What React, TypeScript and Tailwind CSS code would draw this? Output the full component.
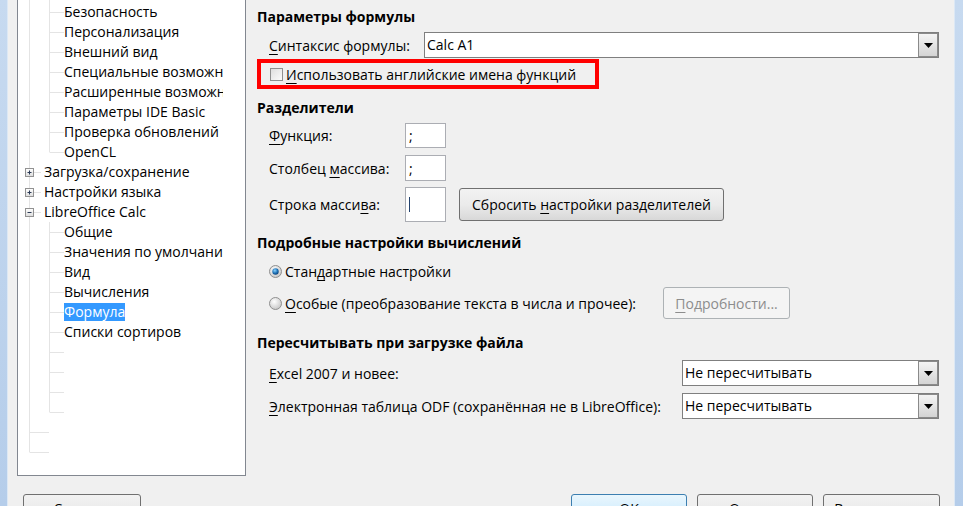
import React from "react";

type TreeRow = {
  text?: string;
  level: 1 | 2;
  exp?: "+" | "-";
  v1?: "full" | "top" | "none";
  v2?: "full" | "top" | "none";
  selected?: boolean;
  h?: number;
};

const LINE = "#e4e4e4";

const rows: TreeRow[] = [
  { level: 2, v1: "full", v2: "full", h: 2 },
  { text: "Безопасность", level: 2, v1: "full", v2: "full" },
  { text: "Персонализация", level: 2, v1: "full", v2: "full" },
  { text: "Внешний вид", level: 2, v1: "full", v2: "full" },
  { text: "Специальные возможности", level: 2, v1: "full", v2: "full" },
  { text: "Расширенные возможности", level: 2, v1: "full", v2: "full" },
  { text: "Параметры IDE Basic", level: 2, v1: "full", v2: "full" },
  { text: "Проверка обновлений", level: 2, v1: "full", v2: "full" },
  { text: "OpenCL", level: 2, v1: "full", v2: "top" },
  { text: "Загрузка/сохранение", level: 1, exp: "+", v1: "full" },
  { text: "Настройки языка", level: 1, exp: "+", v1: "full" },
  { text: "LibreOffice Calc", level: 1, exp: "-", v1: "full" },
  { text: "Общие", level: 2, v1: "full", v2: "full" },
  { text: "Значения по умолчанию", level: 2, v1: "full", v2: "full" },
  { text: "Вид", level: 2, v1: "full", v2: "full" },
  { text: "Вычисления", level: 2, v1: "full", v2: "full" },
  { text: "Формула", level: 2, v1: "full", v2: "full", selected: true },
  { text: "Списки сортиров", level: 2, v1: "full", v2: "full" },
  { level: 2, v1: "full", v2: "full" },
  { level: 2, v1: "full", v2: "full" },
  { level: 2, v1: "full", v2: "full" },
  { level: 2, v1: "full", v2: "top" },
  { level: 1, v1: "full" },
  { level: 1, v1: "top" },
];

function Connector({ row }: { row: TreeRow }) {
  const h = row.h ?? 20;
  const wide = row.level === 2 || !row.text;
  const w = wide ? 46 : 26;
  const vEnd = (s?: string) => (s === "top" ? 10 : h);
  return (
    <svg width={w} height={h} className="shrink-0 block">
      {row.v1 && row.v1 !== "none" && (
        <line x1={11.5} y1={0} x2={11.5} y2={vEnd(row.v1)} stroke={LINE} />
      )}
      {row.level === 2 && row.v2 && row.v2 !== "none" && (
        <line x1={31.5} y1={0} x2={31.5} y2={vEnd(row.v2)} stroke={LINE} />
      )}
      {h === 20 && row.level === 2 && (
        <line x1={31.5} y1={10.5} x2={46} y2={10.5} stroke={LINE} />
      )}
      {h === 20 && row.level === 1 && !row.exp && (
        <line x1={11.5} y1={10.5} x2={31} y2={10.5} stroke={LINE} />
      )}
      {row.exp && (
        <g>
          <line x1={16} y1={10.5} x2={23} y2={10.5} stroke={LINE} />
          <defs>
            <linearGradient id="expg" x1="0" y1="0" x2="0" y2="1">
              <stop offset="0" stopColor="#ffffff" />
              <stop offset="1" stopColor="#dcdcdc" />
            </linearGradient>
          </defs>
          <rect x={7.5} y={6.5} width={8} height={8} fill="url(#expg)" stroke="#929292" />
          <line x1={9.5} y1={10.5} x2={13.5} y2={10.5} stroke="#2b3a55" />
          {row.exp === "+" && <line x1={11.5} y1={8.5} x2={11.5} y2={12.5} stroke="#2b3a55" />}
        </g>
      )}
    </svg>
  );
}

function Tree() {
  return (
    <div className="ml-[9px] w-[229px] h-[476px] bg-white border-x border-b border-[#828790]">
      <div className="w-[205px] overflow-hidden">
        {rows.map((r, i) => (
          <div
            key={i}
            className="flex items-center whitespace-nowrap"
            style={{ height: r.h ?? 20 }}
          >
            <Connector row={r} />
            {r.text && (
              <span
                className={
                  r.selected
                    ? "bg-[#3399ff] text-white h-[18px] leading-[18px]"
                    : "leading-[20px]"
                }
              >
                {r.text}
              </span>
            )}
          </div>
        ))}
      </div>
    </div>
  );
}

function U({ children }: { children: React.ReactNode }) {
  return <span className="underline underline-offset-[3px] decoration-1">{children}</span>;
}

function DropBtn() {
  return (
    <div className="w-[20px] h-full border border-[#8a8a8a] bg-gradient-to-b from-[#f4f4f4] to-[#d4d4d4] flex items-center justify-center shrink-0">
      <svg width="9" height="5">
        <polygon points="0,0 9,0 4.5,5" fill="#000" />
      </svg>
    </div>
  );
}

function Combo({ value, w }: { value: string; w: string }) {
  return (
    <div className={`${w} h-[26px] border border-[#7f7f7f] bg-white flex items-stretch shrink-0`}>
      <div className="flex-1 pl-[2px] leading-[24px] whitespace-nowrap">{value}</div>
      <DropBtn />
    </div>
  );
}

function Heading({ children, mt }: { children: React.ReactNode; mt: string }) {
  return <div className={`${mt} h-[20px] leading-[20px] font-bold whitespace-nowrap`}>{children}</div>;
}

function SmallInput({ h, children }: { h: string; children?: React.ReactNode }) {
  return (
    <div className={`w-[41px] ${h} border border-[#abadb3] bg-white pl-[3px] flex items-center shrink-0`}>
      {children}
    </div>
  );
}

function WinButton({
  children,
  className = "",
  disabled,
}: {
  children: React.ReactNode;
  className?: string;
  disabled?: boolean;
}) {
  return (
    <div
      className={`rounded-[3px] border flex items-center justify-center whitespace-nowrap shrink-0 ${
        disabled
          ? "border-[#adb2b5] bg-[#f4f4f4] text-[#8d8d8d]"
          : "border-[#707070] bg-gradient-to-b from-[#f2f2f2] via-[#ebebeb] to-[#d8d8d8]"
      } ${className}`}
    >
      {children}
    </div>
  );
}

function Radio({ checked }: { checked?: boolean }) {
  return (
    <svg width="13" height="13" className="shrink-0">
      <defs>
        <radialGradient id="rg1" cx="0.4" cy="0.35" r="0.7">
          <stop offset="0" stopColor="#ffffff" />
          <stop offset="1" stopColor="#c4c4c4" />
        </radialGradient>
        <radialGradient id="rg2" cx="0.4" cy="0.35" r="0.7">
          <stop offset="0" stopColor="#8ad3ff" />
          <stop offset="0.6" stopColor="#1d6fb4" />
          <stop offset="1" stopColor="#0d3f73" />
        </radialGradient>
      </defs>
      <circle cx="6.5" cy="6.5" r="6" fill="url(#rg1)" stroke="#8f8f8f" />
      {checked && <circle cx="6.5" cy="6.5" r="3.2" fill="url(#rg2)" />}
    </svg>
  );
}

function RightPanel() {
  return (
    <div className="flex-1 pl-[11px] flex flex-col">
      <Heading mt="mt-[7px]">Параметры формулы</Heading>
      <div className="mt-[5px] h-[26px] flex items-center">
        <div className="ml-[12px] w-[155px]">
          <U>С</U>интаксис формулы:
        </div>
        <Combo value="Calc A1" w="w-[515px]" />
      </div>
      <div className="mt-[1px] w-[342px] h-[30px] border-4 border-[#ff0000] flex items-center pl-[9px]">
        <div className="w-[13px] h-[13px] border border-[#8f8f8f] bg-gradient-to-br from-[#dedede] to-[#fbfbfb] shrink-0" />
        <div className="ml-[3px] whitespace-nowrap">
          <U>И</U>спользовать английские имена функций
        </div>
      </div>
      <Heading mt="mt-[9px]">Разделители</Heading>
      <div className="mt-[5px] flex items-center">
        <div className="ml-[12px] w-[136px]">
          <U>Ф</U>ункция:
        </div>
        <SmallInput h="h-[25px]">;</SmallInput>
      </div>
      <div className="mt-[7px] flex items-center">
        <div className="ml-[12px] w-[136px]">
          Столбец <U>м</U>ассива:
        </div>
        <SmallInput h="h-[26px]">;</SmallInput>
      </div>
      <div className="mt-[6px] flex items-center">
        <div className="ml-[12px] w-[136px]">
          Строка масси<U>в</U>а:
        </div>
        <SmallInput h="h-[35px]">
          <div className="w-px h-[15px] bg-[#23426e]" />
        </SmallInput>
        <WinButton className="ml-[13px] w-[265px] h-[33px]">
          <span>
            Сбросить <U>н</U>астройки разделителей
          </span>
        </WinButton>
      </div>
      <Heading mt="mt-[11px]">Подробные настройки вычислений</Heading>
      <div className="mt-[8px] h-[20px] flex items-center ml-[12px]">
        <Radio checked />
        <div className="ml-[3px]">
          Стан<U>д</U>артные настройки
        </div>
      </div>
      <div className="mt-[6px] h-[32px] flex items-center ml-[12px]">
        <Radio />
        <div className="ml-[3px] w-[378px] whitespace-nowrap">
          <U>О</U>собые (преобразование текста в числа и прочее):
        </div>
        <WinButton disabled className="w-[127px] h-[32px]">
          <span>
            <U>П</U>одробности...
          </span>
        </WinButton>
      </div>
      <Heading mt="mt-[14px]">Пересчитывать при загрузке файла</Heading>
      <div className="mt-[7px] flex items-center">
        <div className="ml-[12px] w-[413px] whitespace-nowrap">
          <U>E</U>xcel 2007 и новее:
        </div>
        <Combo value="Не пересчитывать" w="w-[257px]" />
      </div>
      <div className="mt-[7px] flex items-center">
        <div className="ml-[12px] w-[413px] whitespace-nowrap">
          <U>Э</U>лектронная таблица ODF (сохранённая не в LibreOffice):
        </div>
        <Combo value="Не пересчитывать" w="w-[257px]" />
      </div>
    </div>
  );
}

export default function App() {
  return (
    <div className="w-[963px] h-[506px] overflow-hidden flex bg-[#f0f0f0] text-black text-[14px] font-['Open_Sans','Noto_Sans',sans-serif]">
      <div className="w-[8px] shrink-0 bg-gradient-to-b from-[#c7daf0] to-[#b5cdea] border-r border-[#dce8f5]" />
      <div className="flex-1 flex flex-col">
        <div className="flex">
          <Tree />
          <RightPanel />
        </div>
        <div className="mt-[18px] flex">
          <WinButton className="ml-[15px] w-[118px] h-[32px] !items-start pt-[3px]">Справка</WinButton>
          <div className="flex-1" />
          <div className="flex gap-[10px] mr-[14px]">
            <div className="w-[116px] h-[32px] rounded-[3px] border border-[#3c7fb1] bg-gradient-to-b from-[#eaf6fd] to-[#bee6fd] flex justify-center pt-[3px]">
              OK
            </div>
            <WinButton className="w-[116px] h-[32px] !items-start pt-[3px]">Отмена</WinButton>
            <WinButton className="w-[117px] h-[32px] !items-start pt-[3px]">Восстановить</WinButton>
          </div>
        </div>
      </div>
      <div className="w-[9px] shrink-0 bg-gradient-to-b from-[#c7daf0] to-[#b5cdea] border-l border-[#dce8f5]" />
    </div>
  );
}
